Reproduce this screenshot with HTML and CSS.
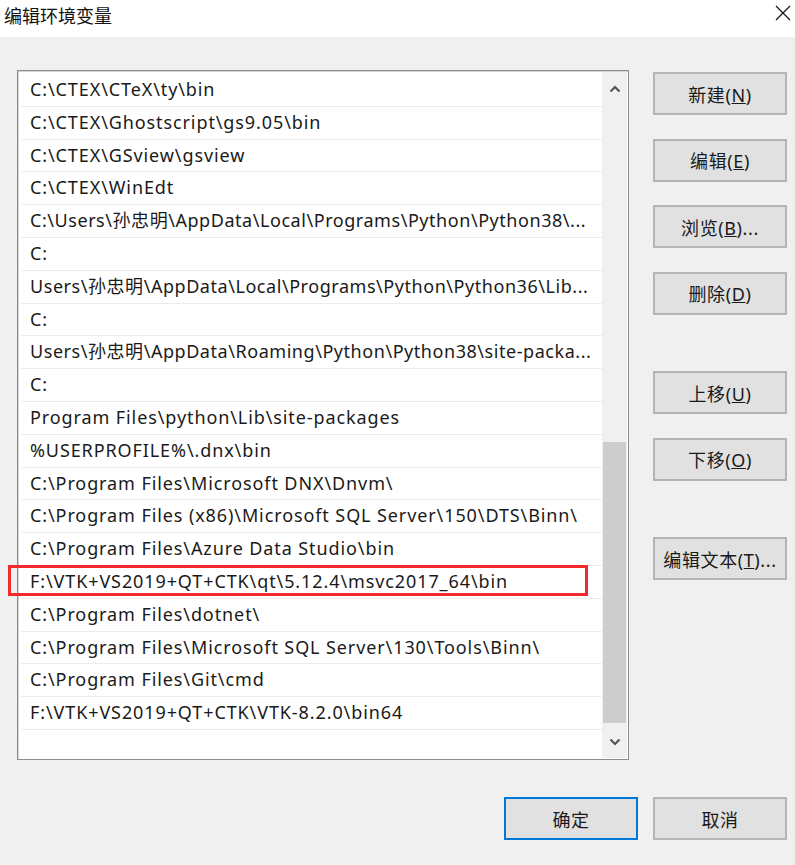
FILE: index.html
```html
<!DOCTYPE html>
<html lang="zh-CN">
<head>
<meta charset="utf-8">
<title>编辑环境变量</title>
<link rel="stylesheet" href="styles.css">
</head>
<body>
<div class="dialog">
  <div class="titlebar">
    <span class="title">编辑环境变量</span>
    <svg class="close" width="16" height="16" viewBox="0 0 16 16"><path d="M1 1 L15 15 M15 1 L1 15" stroke="#111" stroke-width="1.2" fill="none"/></svg>
  </div>
  <div class="body">
    <div class="main">
      <div class="listbox">
        <ul class="items">
          <li class="row">C:\CTEX\CTeX\ty\bin</li>
          <li class="row">C:\CTEX\Ghostscript\gs9.05\bin</li>
          <li class="row">C:\CTEX\GSview\gsview</li>
          <li class="row">C:\CTEX\WinEdt</li>
          <li class="row long">C:\Users\孙忠明\AppData\Local\Programs\Python\Python38\...</li>
          <li class="row">C:</li>
          <li class="row long">Users\孙忠明\AppData\Local\Programs\Python\Python36\Lib...</li>
          <li class="row">C:</li>
          <li class="row long">Users\孙忠明\AppData\Roaming\Python\Python38\site-packa...</li>
          <li class="row">C:</li>
          <li class="row">Program Files\python\Lib\site-packages</li>
          <li class="row">%USERPROFILE%\.dnx\bin</li>
          <li class="row">C:\Program Files\Microsoft DNX\Dnvm\</li>
          <li class="row">C:\Program Files (x86)\Microsoft SQL Server\150\DTS\Binn\</li>
          <li class="row">C:\Program Files\Azure Data Studio\bin</li>
          <li class="row marked">F:\VTK+VS2019+QT+CTK\qt\5.12.4\msvc2017_64\bin</li>
          <li class="row">C:\Program Files\dotnet\</li>
          <li class="row">C:\Program Files\Microsoft SQL Server\130\Tools\Binn\</li>
          <li class="row">C:\Program Files\Git\cmd</li>
          <li class="row">F:\VTK+VS2019+QT+CTK\VTK-8.2.0\bin64</li>
        </ul>
        <div class="scrollbar">
          <div class="arrow">
            <svg width="12" height="8" viewBox="0 0 12 8"><path d="M1.5 6.5 L6 2 L10.5 6.5" stroke="#555" stroke-width="2.2" fill="none"/></svg>
          </div>
          <div class="track"><div class="thumb"></div></div>
          <div class="arrow">
            <svg width="12" height="8" viewBox="0 0 12 8"><path d="M1.5 1.5 L6 6 L10.5 1.5" stroke="#555" stroke-width="2.2" fill="none"/></svg>
          </div>
        </div>
      </div>
      <div class="side">
        <button class="btn">新建(<u>N</u>)</button>
        <button class="btn">编辑(<u>E</u>)</button>
        <button class="btn">浏览(<u>B</u>)...</button>
        <button class="btn">删除(<u>D</u>)</button>
        <button class="btn spaced">上移(<u>U</u>)</button>
        <button class="btn">下移(<u>O</u>)</button>
        <button class="btn spaced">编辑文本(<u>T</u>)...</button>
      </div>
    </div>
    <div class="footer">
      <button class="btn default">确定</button>
      <button class="btn">取消</button>
    </div>
  </div>
</div>
</body>
</html>
```
FILE: styles.css
```css
html, body {
  margin: 0;
  padding: 0;
}
body {
  width: 795px;
  height: 865px;
  background: #f0f0f0;
  font-family: "Noto Sans", "Noto Sans CJK SC", sans-serif;
  color: #1a1a1a;
  overflow: hidden;
}
.dialog {
  display: flex;
  flex-direction: column;
}
.titlebar {
  height: 37px;
  background: #ffffff;
  display: flex;
  align-items: center;
  justify-content: space-between;
  padding: 0 2px 0 4px;
  box-sizing: border-box;
}
.title {
  font-size: 18px;
  color: #111;
  font-family: "Noto Sans CJK SC", sans-serif;
  margin-top: -8px;
}
.close {
  margin-top: -12px;
  margin-right: 2px;
}
.body {
  padding: 33px 8px 0 17px;
}
.main {
  display: flex;
  gap: 24px;
}
.listbox {
  width: 612px;
  height: 690px;
  box-sizing: border-box;
  border: 1px solid #8c8c8c;
  box-shadow: inset 1px 1px 0 #d4d4d4;
  background: #ffffff;
  display: flex;
}
.items {
  list-style: none;
  margin: 0;
  padding: 3px 0 0 3px;
  flex: 1;
  min-width: 0;
}
.row {
  height: 32.8px;
  line-height: 31.8px;
  box-sizing: border-box;
  border-bottom: 1px solid #ececec;
  padding-left: 9px;
  padding-right: 0;
  font-size: 18px;
  letter-spacing: 0.9px;
  white-space: nowrap;
  overflow: hidden;
  position: relative;
}
.row.long {
  letter-spacing: 0.55px;
}
.row.marked {
  overflow: visible;
}
.row.marked::after {
  content: "";
  position: absolute;
  left: -13px;
  top: -1px;
  width: 580px;
  height: 31px;
  border: 3px solid #f02a2d;
  box-sizing: border-box;
}
.scrollbar {
  width: 25px;
  margin: 1px 1px 1px 0;
  background: #f0f0f0;
  display: flex;
  flex-direction: column;
}
.arrow {
  height: 33px;
  display: flex;
  align-items: center;
  justify-content: center;
}
.track {
  flex: 1;
  display: flex;
  flex-direction: column;
  justify-content: flex-end;
  padding: 0 1px 2px;
}
.thumb {
  height: 281px;
  background: #cdcdcd;
}
.side {
  display: flex;
  flex-direction: column;
  gap: 23.5px;
  padding-top: 2px;
}
.btn {
  width: 134px;
  height: 43px;
  box-sizing: border-box;
  background: #e1e1e1;
  border: 2px solid #b4b4b4;
  border-radius: 0;
  font-family: "Noto Sans", "Noto Sans CJK SC", sans-serif;
  font-size: 18px;
  letter-spacing: 0.6px;
  color: #1a1a1a;
  padding: 0;
  margin: 0;
}
.btn.spaced {
  margin-top: 33px;
}
.btn.default {
  border-color: #0078d7;
}
.footer {
  display: flex;
  justify-content: flex-end;
  gap: 15px;
  margin-top: 37px;
}
```
